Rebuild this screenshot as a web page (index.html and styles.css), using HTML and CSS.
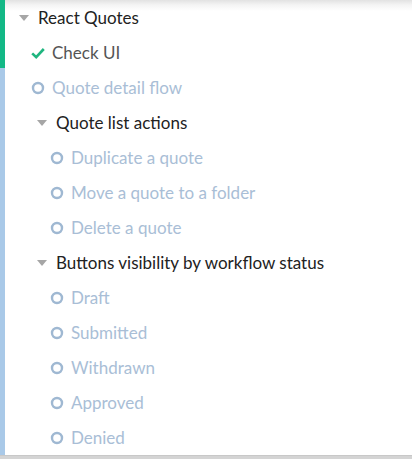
FILE: index.html
```html
<!DOCTYPE html>
<html>
<head>
<meta charset="utf-8">
<link rel="stylesheet" href="styles.css">
</head>
<body>
<div class="panel">
  <div class="rail"><div class="rail-done"></div><div class="rail-todo"></div></div>
  <ul class="tree">
    <li class="row group lvl0"><span class="caret"></span><span class="label">React Quotes</span></li>
    <li class="row done lvl1"><svg class="icon" viewBox="0 0 14 14"><path d="M1.2 7.4 L5.2 11.2 L12.8 3" fill="none" stroke="#1fb57f" stroke-width="2.6"/></svg><span class="label">Check UI</span></li>
    <li class="row todo lvl1"><svg class="icon" viewBox="0 0 14 14"><circle cx="7" cy="7" r="5" fill="none" stroke="#9fb8d2" stroke-width="2.4"/></svg><span class="label">Quote detail flow</span></li>
    <li class="row group lvl1b"><span class="caret"></span><span class="label">Quote list actions</span></li>
    <li class="row todo lvl2"><svg class="icon" viewBox="0 0 14 14"><circle cx="7" cy="7" r="5" fill="none" stroke="#9fb8d2" stroke-width="2.4"/></svg><span class="label">Duplicate a quote</span></li>
    <li class="row todo lvl2"><svg class="icon" viewBox="0 0 14 14"><circle cx="7" cy="7" r="5" fill="none" stroke="#9fb8d2" stroke-width="2.4"/></svg><span class="label">Move a quote to a folder</span></li>
    <li class="row todo lvl2"><svg class="icon" viewBox="0 0 14 14"><circle cx="7" cy="7" r="5" fill="none" stroke="#9fb8d2" stroke-width="2.4"/></svg><span class="label">Delete a quote</span></li>
    <li class="row group lvl1b"><span class="caret"></span><span class="label">Buttons visibility by workflow status</span></li>
    <li class="row todo lvl2"><svg class="icon" viewBox="0 0 14 14"><circle cx="7" cy="7" r="5" fill="none" stroke="#9fb8d2" stroke-width="2.4"/></svg><span class="label">Draft</span></li>
    <li class="row todo lvl2"><svg class="icon" viewBox="0 0 14 14"><circle cx="7" cy="7" r="5" fill="none" stroke="#9fb8d2" stroke-width="2.4"/></svg><span class="label">Submitted</span></li>
    <li class="row todo lvl2"><svg class="icon" viewBox="0 0 14 14"><circle cx="7" cy="7" r="5" fill="none" stroke="#9fb8d2" stroke-width="2.4"/></svg><span class="label">Withdrawn</span></li>
    <li class="row todo lvl2"><svg class="icon" viewBox="0 0 14 14"><circle cx="7" cy="7" r="5" fill="none" stroke="#9fb8d2" stroke-width="2.4"/></svg><span class="label">Approved</span></li>
    <li class="row todo lvl2"><svg class="icon" viewBox="0 0 14 14"><circle cx="7" cy="7" r="5" fill="none" stroke="#9fb8d2" stroke-width="2.4"/></svg><span class="label">Denied</span></li>
  </ul>
</div>
</body>
</html>
```
FILE: styles.css
```css
html, body {
  margin: 0;
  padding: 0;
  background: #d4d4d4;
  font-family: Lato, "Noto Sans", sans-serif;
}
.panel {
  display: flex;
  height: 455px;
  background: linear-gradient(#e2e2e2 0, #f4f4f4 5px, #ffffff 11px);
  border-bottom: 1px solid #c8c8c8;
  overflow: hidden;
}
.rail {
  width: 5px;
  display: flex;
  flex-direction: column;
  flex: none;
}
.rail-done { height: 68px; background: #13b886; }
.rail-todo { flex: 1; background: #a9c9e8; }
.tree {
  list-style: none;
  margin: 0;
  padding: 0;
  flex: 1;
}
.row {
  height: 35px;
  display: flex;
  align-items: center;
  font-size: 17px;
}
.lvl0 { padding-left: 14px; }
.lvl1 { padding-left: 26px; }
.lvl1b { padding-left: 32px; }
.lvl2 { padding-left: 45px; }
.caret {
  width: 0;
  height: 0;
  border-left: 5px solid transparent;
  border-right: 5px solid transparent;
  border-top: 6px solid #a6a6a6;
  margin-right: 9px;
  margin-top: 1px;
}
.icon {
  width: 14px;
  height: 14px;
  margin-right: 7px;
  flex: none;
}
.group .label { color: #222; }
.done .label { color: #555; }
.todo .label { color: #a9bed6; }
```
